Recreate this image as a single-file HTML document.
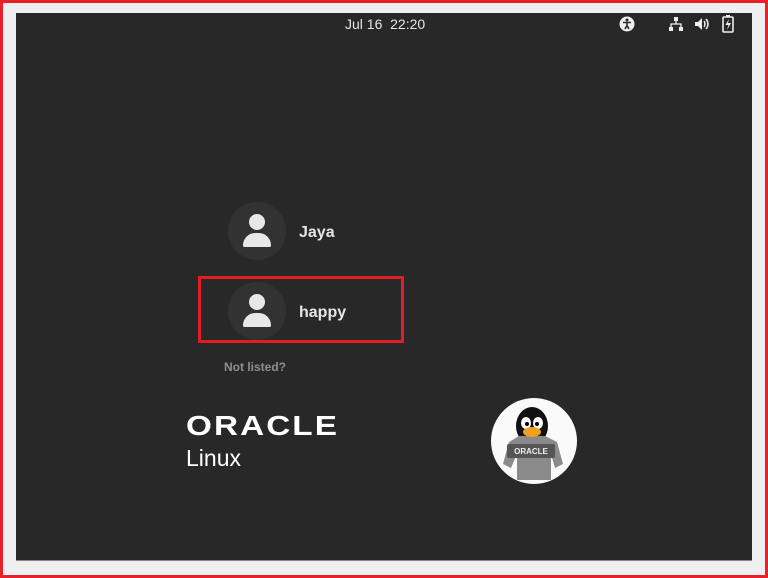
<!DOCTYPE html>
<html><head><style>
body{margin:0;width:768px;height:578px;background:#efefef;position:relative;overflow:hidden;font-family:"Liberation Sans",sans-serif}
.frame{position:absolute;left:0;top:0;width:762px;height:572px;border:3px solid #e8202a}
.panel{position:absolute;left:16px;top:13px;width:736px;height:547px;background:#282828;border-bottom:1px solid #888}
.t{position:absolute;color:#e6e6e6;white-space:nowrap}
.av{position:absolute;width:58px;height:58px;border-radius:50%;background:#323232}
.av .h{position:absolute;left:21px;top:12px;width:16px;height:16px;border-radius:50%;background:#e8e8e8}
.av .b{position:absolute;left:15px;top:31px;width:28px;height:14px;border-radius:14px 14px 2px 2px;background:#e8e8e8}
.sel{position:absolute;left:198px;top:276px;width:200px;height:61px;border:3px solid #e01c24}
</style></head><body>
<div class="frame"></div>
<div class="panel"></div>
<div class="t" style="left:345px;top:16px;font-size:14px">Jul 16&nbsp;&nbsp;22:20</div>
<svg style="position:absolute;left:619px;top:16px" width="16" height="16" viewBox="0 0 16 16"><circle cx="8" cy="8" r="7.5" fill="#eee"/><circle cx="8" cy="4" r="1.5" fill="#282828"/><path d="M4 6.5h8M8 6.5v3M8 9.5l-2 3.5M8 9.5l2 3.5" stroke="#282828" stroke-width="1.6" fill="none"/></svg>
<svg style="position:absolute;left:668px;top:16px" width="16" height="16" viewBox="0 0 16 16" fill="#eee"><rect x="6" y="1" width="4" height="4"/><rect x="1" y="11" width="4" height="4"/><rect x="11" y="11" width="4" height="4"/><path d="M8 5v3M3 11V8h10v3" stroke="#eee" stroke-width="1.3" fill="none"/></svg>
<svg style="position:absolute;left:694px;top:16px" width="16" height="16" viewBox="0 0 16 16" fill="#eee"><path d="M1 6h3l4-4v12l-4-4H1z"/><path d="M10 5q2 3 0 6M12 3q4 5 0 10" stroke="#eee" stroke-width="1.5" fill="none"/></svg>
<svg style="position:absolute;left:722px;top:15px" width="12" height="18" viewBox="0 0 12 18"><rect x="4" y="0" width="4" height="2" fill="#eee"/><rect x="1" y="2" width="10" height="15" rx="1" fill="none" stroke="#eee" stroke-width="1.6"/><path d="M7 4L3.5 10h3L5 15l4-7H6z" fill="#eee"/></svg>
<div class="av" style="left:228px;top:202px"><div class="h"></div><div class="b"></div></div>
<div class="t" style="left:299px;top:224px;font-size:16px;font-weight:bold">Jaya</div>
<div class="av" style="left:228px;top:282px"><div class="h"></div><div class="b"></div></div>
<div class="t" style="left:299px;top:304px;font-size:16px;font-weight:bold">happy</div>
<div class="sel"></div>
<div class="t" style="left:224px;top:360px;font-size:12px;font-weight:bold;color:#8e8e8e">Not listed?</div>
<div class="t" style="left:186px;top:412px;font-size:32px;font-weight:bold;letter-spacing:2px;color:#fff;line-height:32px;transform:scale(1.04,0.86);transform-origin:left top">ORACLE</div>
<div class="t" style="left:186px;top:445px;font-size:23px;color:#fff">Linux</div>
<svg style="position:absolute;left:491px;top:398px" width="86" height="86" viewBox="0 0 86 86">
<circle cx="43" cy="43" r="43" fill="#fafafa"/>
<ellipse cx="41" cy="28" rx="16" ry="19" fill="#111"/>
<ellipse cx="35" cy="25" rx="5" ry="6" fill="#fff"/><ellipse cx="47" cy="25" rx="5" ry="6" fill="#fff"/>
<circle cx="36" cy="26" r="2" fill="#000"/><circle cx="46" cy="26" r="2" fill="#000"/>
<path d="M18 44l10-6h26l12 6 6 22-8 4-4-14v26H26V56l-6 14-8-4z" fill="#8a8a8a"/>
<ellipse cx="41" cy="34" rx="9" ry="5" fill="#f0a020"/>
<rect x="16" y="46" width="48" height="14" rx="2" fill="#555"/>
<text x="40" y="56" font-size="8" font-family="Liberation Sans" font-weight="bold" fill="#eee" text-anchor="middle">ORACLE</text>
</svg>
</body></html>
